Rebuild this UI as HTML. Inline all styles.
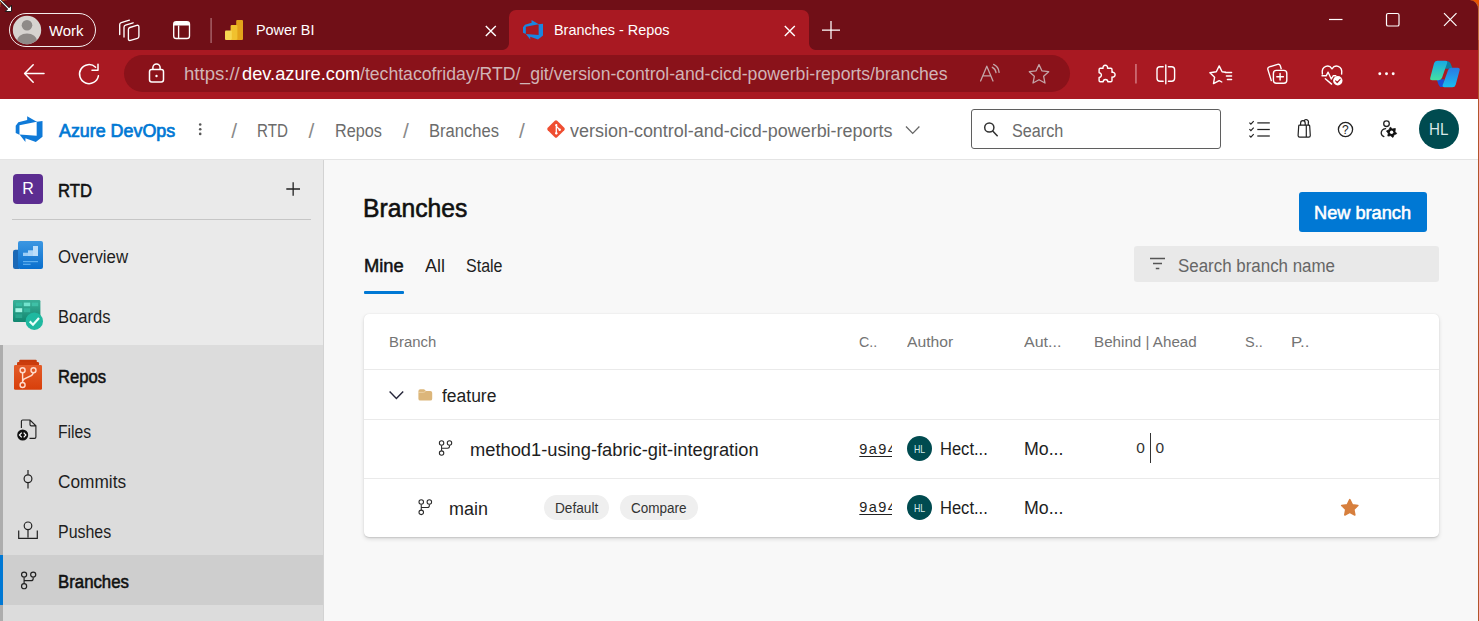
<!DOCTYPE html>
<html lang="en"><head><meta charset="utf-8"><title>Branches - Repos</title>
<style>
html,body{margin:0;padding:0;}
body{width:1479px;height:621px;overflow:hidden;position:relative;background:#f8f8f8;font-family:"Liberation Sans",sans-serif;}
body>span{display:block;}
.c9{position:absolute;overflow:hidden;white-space:pre;font-family:"Liberation Sans",sans-serif;}
</style></head>
<body>
<div style="position:absolute;left:1460px;top:0px;width:19px;height:20px;background:#e85400;"></div>
<div style="position:absolute;left:0px;top:0px;width:6px;height:6px;background:#c8531c;"></div>
<div style="position:absolute;left:0px;top:0px;width:1478px;height:50px;background:#700f17;border-right:1px solid #c2713d;border-top-right-radius:9px;border-top-left-radius:7px;"></div>
<div style="position:absolute;left:0px;top:50px;width:1479px;height:49px;background:#a91922;"></div>
<div style="position:absolute;left:509px;top:10px;width:300px;height:40px;background:#a91922;border-radius:7px 7px 0 0;"></div>
<div style="position:absolute;left:502px;top:43px;width:7px;height:7px;background:radial-gradient(circle at 0 0,#700f17 6.5px,#a91922 7.5px);"></div>
<div style="position:absolute;left:809px;top:43px;width:7px;height:7px;background:radial-gradient(circle at 100% 0,#700f17 6.5px,#a91922 7.5px);"></div>
<div style="position:absolute;left:9px;top:13px;width:84.8px;height:32px;border:1.5px solid rgba(255,255,255,.92);border-radius:18px;"></div>
<div style="position:absolute;left:124px;top:55px;width:946px;height:37px;background:#8a121a;border-radius:18.5px;"></div>
<div style="position:absolute;left:0px;top:99px;width:1478px;height:60px;background:#fff;"></div>
<div style="position:absolute;left:0px;top:159px;width:1478px;height:1px;background:#e4e4e4;"></div>
<div style="position:absolute;left:0px;top:160px;width:1478px;height:461px;background:#f8f8f8;"></div>
<div style="position:absolute;left:971px;top:109px;width:248px;height:38px;border:1px solid #5f5f5f;border-radius:3px;background:#fff;"></div>
<div style="position:absolute;left:1419px;top:109px;width:40px;height:40px;border-radius:50%;background:#004b50;"></div>
<div style="position:absolute;left:0px;top:160px;width:323px;height:461px;background:#eaeaea;"></div>
<div style="position:absolute;left:323px;top:160px;width:1px;height:461px;background:#d3d3d3;"></div>
<div style="position:absolute;left:12px;top:219px;width:299px;height:1px;background:#c6c6c6;"></div>
<div style="position:absolute;left:0px;top:345px;width:323px;height:276px;background:#dcdcdc;"></div>
<div style="position:absolute;left:0px;top:345px;width:3px;height:276px;background:#adadad;"></div>
<div style="position:absolute;left:0px;top:555px;width:323px;height:50px;background:#cecece;"></div>
<div style="position:absolute;left:0px;top:555px;width:3px;height:50px;background:#0078d4;"></div>
<div style="position:absolute;left:13px;top:174px;width:30px;height:30px;background:#5c2d91;border-radius:4px;"></div>
<div style="position:absolute;left:1299px;top:192px;width:128px;height:40px;background:#0078d4;border-radius:3px;"></div>
<div style="position:absolute;left:1134px;top:246px;width:304.5px;height:36px;background:#e9e9e9;border-radius:3px;"></div>
<div style="position:absolute;left:364px;top:291px;width:40px;height:3px;background:#0078d4;border-radius:1px;"></div>
<div style="position:absolute;left:364px;top:314px;width:1075px;height:223px;background:#fff;border-radius:5px;box-shadow:0 2px 4.5px rgba(0,0,0,.13),0 .4px 1.2px rgba(0,0,0,.11);"></div>
<div style="position:absolute;left:364px;top:369px;width:1075px;height:1px;background:#eaeaea;"></div>
<div style="position:absolute;left:364px;top:419px;width:1075px;height:1px;background:#eaeaea;"></div>
<div style="position:absolute;left:364px;top:478px;width:1075px;height:1px;background:#eaeaea;"></div>
<div style="position:absolute;left:544px;top:495px;width:65px;height:25px;background:#efefef;border-radius:12.5px;"></div>
<div style="position:absolute;left:620px;top:495px;width:78px;height:25px;background:#efefef;border-radius:12.5px;"></div>
<div style="position:absolute;left:907px;top:436.0px;width:25px;height:25px;border-radius:50%;background:#004b50;"></div>
<div style="position:absolute;left:907px;top:494.8px;width:25px;height:25px;border-radius:50%;background:#004b50;"></div>
<div style="position:absolute;left:1149.6px;top:433px;width:1.2000000000000455px;height:29.5px;background:#333;"></div>
<div style="position:absolute;left:1478px;top:40px;width:1px;height:581px;background:#b4552b;"></div>
<span style="position:absolute;left:49.00px;top:20.80px;font-size:15px;font-weight:400;color:#fff;line-height:20px;white-space:pre;transform-origin:0 50%;transform:scaleX(0.9936);">Work</span>
<span style="position:absolute;left:256.04px;top:19.60px;font-size:15px;font-weight:400;color:#fff;line-height:20px;white-space:pre;transform-origin:0 50%;transform:scaleX(0.9593);">Power BI</span>
<span style="position:absolute;left:554.04px;top:19.60px;font-size:15px;font-weight:400;color:#fff;line-height:20px;white-space:pre;transform-origin:0 50%;transform:scaleX(0.9615);">Branches - Repos</span>
<span style="position:absolute;left:184.44px;top:63.94px;font-size:17.5px;font-weight:400;color:#d1b4b6;line-height:20px;white-space:pre;transform-origin:0 50%;transform:scaleX(1.0607);">https://</span>
<span style="position:absolute;left:241.50px;top:63.94px;font-size:17.5px;font-weight:400;color:#ffffff;line-height:20px;white-space:pre;transform-origin:0 50%;transform:scaleX(1.0425);">dev.azure.com</span>
<span style="position:absolute;left:360.30px;top:63.94px;font-size:17.5px;font-weight:400;color:#d1b4b6;line-height:20px;white-space:pre;transform-origin:0 50%;transform:scaleX(1.0072);">/techtacofriday/RTD/_git/version-control-and-cicd-powerbi-reports/branches</span>
<span style="position:absolute;left:59.20px;top:120.54px;font-size:17.5px;font-weight:400;color:#0078d4;line-height:20px;white-space:pre;transform-origin:0 50%;transform:scaleX(1.0207);-webkit-text-stroke:0.70px #0078d4;">Azure DevOps</span>
<span style="position:absolute;left:231.20px;top:121.32px;font-size:21px;font-weight:400;color:#8a8a8a;line-height:20px;white-space:pre;transform-origin:0 50%;transform:scaleX(1.0000);">/</span>
<span style="position:absolute;left:257.16px;top:120.76px;font-size:18px;font-weight:400;color:#6b6b6b;line-height:20px;white-space:pre;transform-origin:0 50%;transform:scaleX(0.8411);">RTD</span>
<span style="position:absolute;left:308.50px;top:121.32px;font-size:21px;font-weight:400;color:#8a8a8a;line-height:20px;white-space:pre;transform-origin:0 50%;transform:scaleX(1.0000);">/</span>
<span style="position:absolute;left:335.10px;top:120.76px;font-size:18px;font-weight:400;color:#6b6b6b;line-height:20px;white-space:pre;transform-origin:0 50%;transform:scaleX(0.9014);">Repos</span>
<span style="position:absolute;left:403.00px;top:121.32px;font-size:21px;font-weight:400;color:#8a8a8a;line-height:20px;white-space:pre;transform-origin:0 50%;transform:scaleX(1.0000);">/</span>
<span style="position:absolute;left:429.08px;top:120.76px;font-size:18px;font-weight:400;color:#6b6b6b;line-height:20px;white-space:pre;transform-origin:0 50%;transform:scaleX(0.9195);">Branches</span>
<span style="position:absolute;left:519.00px;top:121.32px;font-size:21px;font-weight:400;color:#8a8a8a;line-height:20px;white-space:pre;transform-origin:0 50%;transform:scaleX(1.0000);">/</span>
<span style="position:absolute;left:569.50px;top:120.76px;font-size:18px;font-weight:400;color:#6b6b6b;line-height:20px;white-space:pre;transform-origin:0 50%;transform:scaleX(0.9981);">version-control-and-cicd-powerbi-reports</span>
<span style="position:absolute;left:1011.80px;top:120.76px;font-size:18px;font-weight:400;color:#6b6b6b;line-height:20px;white-space:pre;transform-origin:0 50%;transform:scaleX(0.8997);">Search</span>
<span style="position:absolute;left:1428.78px;top:119.48px;font-size:16.5px;font-weight:400;color:#d9e8e8;line-height:20px;white-space:pre;transform-origin:0 50%;transform:scaleX(0.9189);">HL</span>
<span style="position:absolute;left:22.25px;top:178.96px;font-size:16px;font-weight:400;color:#fff;line-height:20px;white-space:pre;transform-origin:0 50%;transform:scaleX(1.0000);">R</span>
<span style="position:absolute;left:58.07px;top:180.76px;font-size:18px;font-weight:400;color:#111;line-height:20px;white-space:pre;transform-origin:0 50%;transform:scaleX(0.9252);-webkit-text-stroke:0.55px #111;">RTD</span>
<span style="position:absolute;left:58.20px;top:246.96px;font-size:18px;font-weight:400;color:#1e1e1e;line-height:20px;white-space:pre;transform-origin:0 50%;transform:scaleX(0.9340);">Overview</span>
<span style="position:absolute;left:58.08px;top:306.56px;font-size:18px;font-weight:400;color:#1e1e1e;line-height:20px;white-space:pre;transform-origin:0 50%;transform:scaleX(0.9191);">Boards</span>
<span style="position:absolute;left:58.08px;top:366.76px;font-size:18px;font-weight:400;color:#111;line-height:20px;white-space:pre;transform-origin:0 50%;transform:scaleX(0.9210);-webkit-text-stroke:0.55px #111;">Repos</span>
<span style="position:absolute;left:58.13px;top:422.26px;font-size:18px;font-weight:400;color:#1e1e1e;line-height:20px;white-space:pre;transform-origin:0 50%;transform:scaleX(0.8729);">Files</span>
<span style="position:absolute;left:58.20px;top:472.06px;font-size:18px;font-weight:400;color:#1e1e1e;line-height:20px;white-space:pre;transform-origin:0 50%;transform:scaleX(0.9592);">Commits</span>
<span style="position:absolute;left:58.11px;top:522.26px;font-size:18px;font-weight:400;color:#1e1e1e;line-height:20px;white-space:pre;transform-origin:0 50%;transform:scaleX(0.8859);">Pushes</span>
<span style="position:absolute;left:58.07px;top:571.76px;font-size:18px;font-weight:400;color:#111;line-height:20px;white-space:pre;transform-origin:0 50%;transform:scaleX(0.9328);-webkit-text-stroke:0.55px #111;">Branches</span>
<span style="position:absolute;left:363.46px;top:198.16px;font-size:25.5px;font-weight:400;color:#111;line-height:20px;white-space:pre;transform-origin:0 50%;transform:scaleX(0.9678);-webkit-text-stroke:0.60px #111;">Branches</span>
<span style="position:absolute;left:364.28px;top:255.76px;font-size:18px;font-weight:400;color:#111;line-height:20px;white-space:pre;transform-origin:0 50%;transform:scaleX(1.0183);-webkit-text-stroke:0.50px #111;">Mine</span>
<span style="position:absolute;left:425.00px;top:255.76px;font-size:18px;font-weight:400;color:#1e1e1e;line-height:20px;white-space:pre;transform-origin:0 50%;transform:scaleX(0.9997);">All</span>
<span style="position:absolute;left:466.00px;top:255.76px;font-size:18px;font-weight:400;color:#1e1e1e;line-height:20px;white-space:pre;transform-origin:0 50%;transform:scaleX(0.8899);">Stale</span>
<span style="position:absolute;left:1313.99px;top:203.26px;font-size:18px;font-weight:400;color:#fff;line-height:20px;white-space:pre;transform-origin:0 50%;transform:scaleX(1.0102);-webkit-text-stroke:0.55px #fff;">New branch</span>
<span style="position:absolute;left:1178.00px;top:255.76px;font-size:18px;font-weight:400;color:#666;line-height:20px;white-space:pre;transform-origin:0 50%;transform:scaleX(0.9396);">Search branch name</span>
<span style="position:absolute;left:388.74px;top:331.63px;font-size:15.5px;font-weight:400;color:#747474;line-height:20px;white-space:pre;transform-origin:0 50%;transform:scaleX(0.9602);">Branch</span>
<span style="position:absolute;left:859.00px;top:331.63px;font-size:15.5px;font-weight:400;color:#747474;line-height:20px;white-space:pre;transform-origin:0 50%;transform:scaleX(0.9189);">C..</span>
<span style="position:absolute;left:907.00px;top:331.63px;font-size:15.5px;font-weight:400;color:#747474;line-height:20px;white-space:pre;transform-origin:0 50%;transform:scaleX(1.0109);">Author</span>
<span style="position:absolute;left:1024.00px;top:331.63px;font-size:15.5px;font-weight:400;color:#747474;line-height:20px;white-space:pre;transform-origin:0 50%;transform:scaleX(1.0322);">Aut...</span>
<span style="position:absolute;left:1094.02px;top:331.63px;font-size:15.5px;font-weight:400;color:#747474;line-height:20px;white-space:pre;transform-origin:0 50%;transform:scaleX(0.9798);">Behind | Ahead</span>
<span style="position:absolute;left:1244.50px;top:331.63px;font-size:15.5px;font-weight:400;color:#747474;line-height:20px;white-space:pre;transform-origin:0 50%;transform:scaleX(0.9351);">S..</span>
<span style="position:absolute;left:1290.91px;top:331.63px;font-size:15.5px;font-weight:400;color:#747474;line-height:20px;white-space:pre;transform-origin:0 50%;transform:scaleX(1.0924);">P..</span>
<span style="position:absolute;left:441.60px;top:385.66px;font-size:18px;font-weight:400;color:#1e1e1e;line-height:20px;white-space:pre;transform-origin:0 50%;transform:scaleX(0.9709);">feature</span>
<span style="position:absolute;left:469.78px;top:440.06px;font-size:18px;font-weight:400;color:#1e1e1e;line-height:20px;white-space:pre;transform-origin:0 50%;transform:scaleX(1.0155);">method1-using-fabric-git-integration</span>
<span style="position:absolute;left:449.40px;top:498.86px;font-size:18px;font-weight:400;color:#1e1e1e;line-height:20px;white-space:pre;transform-origin:0 50%;transform:scaleX(0.9972);">main</span>
<span style="position:absolute;left:555.12px;top:497.63px;font-size:15.5px;font-weight:400;color:#333;line-height:20px;white-space:pre;transform-origin:0 50%;transform:scaleX(0.8811);">Default</span>
<span style="position:absolute;left:631.00px;top:497.63px;font-size:15.5px;font-weight:400;color:#333;line-height:20px;white-space:pre;transform-origin:0 50%;transform:scaleX(0.8712);">Compare</span>
<span style="position:absolute;left:940.18px;top:439.36px;font-size:18px;font-weight:400;color:#1e1e1e;line-height:20px;white-space:pre;transform-origin:0 50%;transform:scaleX(0.9178);">Hect...</span>
<span style="position:absolute;left:940.18px;top:498.16px;font-size:18px;font-weight:400;color:#1e1e1e;line-height:20px;white-space:pre;transform-origin:0 50%;transform:scaleX(0.9178);">Hect...</span>
<span style="position:absolute;left:1024.01px;top:439.36px;font-size:18px;font-weight:400;color:#1e1e1e;line-height:20px;white-space:pre;transform-origin:0 50%;transform:scaleX(0.9867);">Mo...</span>
<span style="position:absolute;left:1024.01px;top:498.16px;font-size:18px;font-weight:400;color:#1e1e1e;line-height:20px;white-space:pre;transform-origin:0 50%;transform:scaleX(0.9867);">Mo...</span>
<span style="position:absolute;left:1136.25px;top:437.63px;font-size:15.5px;font-weight:400;color:#333;line-height:20px;white-space:pre;transform-origin:0 50%;transform:scaleX(1.0000);">0</span>
<span style="position:absolute;left:1155.50px;top:437.63px;font-size:15.5px;font-weight:400;color:#333;line-height:20px;white-space:pre;transform-origin:0 50%;transform:scaleX(1.0000);">0</span>
<span style="position:absolute;left:913.70px;top:438.76px;font-size:10.5px;font-weight:400;color:#d6ecec;line-height:20px;white-space:pre;transform-origin:0 50%;transform:scaleX(0.8319);">HL</span>
<span style="position:absolute;left:913.70px;top:497.56px;font-size:10.5px;font-weight:400;color:#d6ecec;line-height:20px;white-space:pre;transform-origin:0 50%;transform:scaleX(0.8319);">HL</span>
<span style="position:absolute;left:1342.10px;top:119.84px;font-size:12px;font-weight:400;color:#222;line-height:20px;white-space:pre;transform-origin:0 50%;transform:scaleX(1.0000);">?</span>
<div class="c9" style="left:859.3px;top:438.7px;width:32.7px;height:20px;font-size:14.5px;line-height:20px;letter-spacing:1.45px;color:#222;text-decoration:underline;text-underline-offset:1.5px;">9a94c</div><div class="c9" style="left:859.3px;top:497.4px;width:32.7px;height:20px;font-size:14.5px;line-height:20px;letter-spacing:1.45px;color:#222;text-decoration:underline;text-underline-offset:1.5px;">9a94c</div><svg width="1479" height="621" viewBox="0 0 1479 621" style="position:absolute;left:0;top:0;pointer-events:none;">
<g><path d="M0.5 0.5 L9 9" stroke="#111" stroke-width="2.600" stroke-linecap="square"/><path d="M11.500 5.200 V11.500 H5.200 Z" fill="#fff" stroke="#111" stroke-width=".900" stroke-linejoin="round"/><path d="M0 0 L9 9" stroke="#fff" stroke-width="1.100"/></g><clipPath id="cpAv"><circle cx="27" cy="30" r="14.2"/></clipPath><circle cx="27" cy="30" r="14.2" fill="#d6d3d0"/><g clip-path="url(#cpAv)"><circle cx="27" cy="25.3" r="5.3" fill="#8e8a88"/><ellipse cx="27" cy="41.5" rx="10.2" ry="8" fill="#8e8a88"/></g><g fill="none" stroke="#ffffff" stroke-width="1.35" stroke-linecap="round" stroke-linejoin="round"><path d="M128.4 29.6 q0-1.6 1.5-2.1 l6.9-2.1 q2.1-.6 2.1 1.5 v9.3 q0 1.6-1.5 2.1 l-6.9 2.1 q-2.1.6-2.1-1.5z"/><path d="M124 37 V27.2 q0-1.6 1.5-2.1 l7.6-2.3"/><path d="M119.7 34.6 V24.8 q0-1.6 1.5-2.1 l8.2-2.5"/></g><g fill="none" stroke="#ffffff" stroke-width="1.35"><rect x="173.7" y="21.7" width="15.8" height="16.8" rx="2.6"/><path d="M178.6 25.5 V38.5"/></g><path d="M174 25.6 V24 a2 2 0 0 1 2-2 h11.2 a2 2 0 0 1 2 2 V25.6z" fill="#ffffff"/><rect x="210.4" y="18" width="1.4" height="25" fill="#a8656b"/><rect x="236.2" y="20" width="6.8" height="20" rx="1" fill="#e3a21a"/><rect x="230.6" y="25" width="6.8" height="15" rx="1" fill="#f0c12e"/><rect x="225" y="30.6" width="6.8" height="9.4" rx="1" fill="#f6d751"/><path d="M485.8 26 L495.8 36 M495.8 26 L485.8 36" stroke="#ffffff" stroke-width="1.4"/><path d="M784.8 26 L794.8 36 M794.8 26 L784.8 36" stroke="#ffffff" stroke-width="1.4"/><path transform="translate(521.75,18.78) scale(1.25,1.22)" d="M17 4v9.74l-4 3.28-6.2-2.26V17l-3.51-4.59 10.23.8V4.44zm-3.41.49L7.85 1v2.29L2.58 4.84 1 6.87v4.61l2.26 1V6.57z" fill="#1a86e0"/><path d="M822 30 H840 M831 21 V39" stroke="#ffffff" stroke-width="1.25"/><path d="M1329 19.5 H1342.5" stroke="#ffffff" stroke-width="1.2"/><rect x="1386.5" y="13.5" width="12.5" height="12.5" rx="1.6" fill="none" stroke="#ffffff" stroke-width="1.2"/><path d="M1444 13.2 L1456.5 25.8 M1456.5 13.2 L1444 25.8" stroke="#ffffff" stroke-width="1.2"/><path d="M44 73.5 H25 M33.2 64.8 L24.6 73.5 L33.2 82.2" fill="none" stroke="#ffffff" stroke-width="1.5" stroke-linecap="round" stroke-linejoin="round"/><path d="M98.4 75.8 A9.5 9.5 0 1 1 95.6 67.2 M92 70.3 H98 V64.3" fill="none" stroke="#ffffff" stroke-width="1.5" stroke-linecap="round" stroke-linejoin="round"/><rect x="149.5" y="69.6" width="14" height="12.4" rx="2.2" fill="none" stroke="#ffffff" stroke-width="1.5"/><path d="M152.9 69.5 V67.6 a3.6 3.6 0 0 1 7.2 0 V69.5" fill="none" stroke="#ffffff" stroke-width="1.5"/><circle cx="156.5" cy="76" r="1.2" fill="#ffffff"/><g fill="none" stroke="#c4a5a8" stroke-width="1.3" stroke-linecap="round" stroke-linejoin="round"><path d="M980.6 81 L986.8 66.2 L993 81 M983 75.8 H990.6"/><path d="M992.3 67.3 q3.3 1.6 3.7 5.3 M993.6 64.4 q5 2.2 5.5 8"/></g><polygon points="1039.00,64.60 1041.88,70.84 1048.70,71.65 1043.66,76.31 1045.00,83.05 1039.00,79.70 1033.00,83.05 1034.34,76.31 1029.30,71.65 1036.12,70.84" fill="none" stroke="#c4a5a8" stroke-width="1.3" stroke-linejoin="round"/><path d="M1101.5 68.2 h1.6 a2.3 2.3 0 1 1 4.4 0 h3.3 q1.2 0 1.2 1.2 v3 a2.4 2.4 0 1 1 0 4.6 v3.6 q0 1.2-1.2 1.2 h-3 a2.3 2.3 0 1 0-4.6 0 h-2.9 q-1.2 0-1.2-1.2 v-3.2 a2.3 2.3 0 1 0 0-4.6 v-3.4 q0-1.2 1.2-1.2z" fill="none" stroke="#ffffff" stroke-width="1.4" stroke-linejoin="round"/><rect x="1135.3" y="64" width="1.3" height="19.5" fill="#d98990"/><g fill="none" stroke="#ffffff" stroke-width="1.4" stroke-linecap="round"><path d="M1163.2 66.8 H1160 a3 3 0 0 0-3 3 V78.3 a3 3 0 0 0 3 3 H1163.2"/><path d="M1168.4 66.8 H1171.6 a3 3 0 0 1 3 3 V78.3 a3 3 0 0 1-3 3 H1168.4"/><path d="M1165.8 65 V83.8"/></g><g fill="none" stroke="#ffffff" stroke-width="1.4" stroke-linecap="round" stroke-linejoin="round"><path d="M1225.5 72.3 l-3.4-.5 l-2.9-5.9 l-2.9 5.9 l-6.4.9 l4.7 4.5 l-1.1 6.4 l5.7-3 l2.6 1.4"/><path d="M1225.4 72.5 H1231.6 M1226.4 76 H1231.6 M1227.4 79.5 H1231.6"/></g><g fill="none" stroke="#ffffff" stroke-width="1.4" stroke-linecap="round" stroke-linejoin="round"><path d="M1271.3 80.6 L1267.9 69.6 q-.6-2 1.4-2.7 l8.3-2.5 q2-.6 2.7 1.4 l.9 2.9"/><rect x="1273.4" y="70.4" width="13.4" height="12.8" rx="3"/><path d="M1280.1 73.5 V80.1 M1276.8 76.8 H1283.4"/></g><g fill="none" stroke="#ffffff" stroke-width="1.4" stroke-linecap="round" stroke-linejoin="round"><path d="M1322.4 74 c-.6-3.2 .4-6.4 3.4-7.6 c2.4-.9 4.8 .2 6.2 2.4 c1.400-2.200 3.800-3.300 6.200-2.400 c3 1.200 4 4.400 3.400 7.600"/><path d="M1325.3 78.8 l6.3 5.300"/><path d="M1322 75.8 h4.200 l1.900-3.600 l3.200 6.800 l1.900-3.200 h2.600"/></g><circle cx="1337.8" cy="80.8" r="4.700" fill="#ffffff"/><path d="M1335.600 80.900 l1.600 1.600 l2.900-3.200" fill="none" stroke="#a91922" stroke-width="1.200" stroke-linecap="round" stroke-linejoin="round"/><circle cx="1379.8" cy="73.700" r="1.450" fill="#ffffff"/><circle cx="1386.5" cy="73.700" r="1.450" fill="#ffffff"/><circle cx="1393.2" cy="73.700" r="1.450" fill="#ffffff"/><defs><linearGradient id="cg1" x1="0" y1="0" x2="0" y2="1"><stop offset="0" stop-color="#18a9e6"/><stop offset="1" stop-color="#45e0a0"/></linearGradient><linearGradient id="cg2" x1="0" y1="0" x2="0" y2="1"><stop offset="0" stop-color="#2b78e2"/><stop offset="1" stop-color="#18bdf2"/></linearGradient></defs><path d="M1444.500 60.900 h1.800 q3.300 0 4.500 3.100 l1.800 4.800 h-8 z" fill="#0d7da3"/><path d="M1436.600 79.200 h7.500 l-.800 7.900 h-1.200 q-2.700 0-3.600-2.700z" fill="#1c50d8"/><path d="M1434.04 63.31 Q1434.70 60.80 1437.30 60.80 L1445.30 60.80 Q1447.90 60.80 1447.05 63.26 L1442.05 77.74 Q1441.20 80.20 1438.60 80.20 L1432.20 80.20 Q1429.60 80.20 1430.26 77.69 Z" fill="url(#cg1)"/><path d="M1448.02 70.25 Q1448.90 67.80 1451.50 67.80 L1457.70 67.80 Q1460.30 67.80 1459.62 70.31 L1455.68 84.79 Q1455.00 87.30 1452.40 87.30 L1444.50 87.30 Q1441.90 87.30 1442.78 84.85 Z" fill="url(#cg2)"/>
<path transform="translate(14.025,114.594) scale(1.675,1.606)" d="M17 4v9.74l-4 3.28-6.2-2.26V17l-3.51-4.59 10.23.8V4.44zm-3.41.49L7.85 1v2.29L2.58 4.84 1 6.87v4.61l2.26 1V6.57z" fill="#0f7ad8"/><circle cx="200.2" cy="124.5" r="1.3" fill="#575757"/><circle cx="200.2" cy="129.2" r="1.3" fill="#575757"/><circle cx="200.2" cy="133.9" r="1.3" fill="#575757"/><rect x="549.3" y="122.3" width="13.400" height="13.400" rx="1.700" transform="rotate(45 556 129)" fill="#ef4e31"/><g stroke="#fff" stroke-width="1.300" fill="none" stroke-linecap="round"><path d="M556.300 125 V133.500 M556.300 126.300 L559.600 129.600"/></g><circle cx="556.300" cy="133.300" r="1.200" fill="#fff"/><circle cx="559.700" cy="129.700" r="1.200" fill="#fff"/><circle cx="556.300" cy="125.200" r="1.100" fill="#fff"/><path d="M906 126.500 L912.700 133.400 L919.400 126.500" fill="none" stroke="#666" stroke-width="1.300"/><circle cx="989.300" cy="127.500" r="4.600" fill="none" stroke="#333" stroke-width="1.500"/><path d="M992.700 131 L997.200 135.700" stroke="#333" stroke-width="1.600" stroke-linecap="round"/><path d="M1249.400 122.60000000000001 l1.500 1.500 l2.800-3" fill="none" stroke="#222222" stroke-width="1.150"/><path d="M1257.300 122.9 H1269.800" stroke="#222222" stroke-width="1.250"/><path d="M1249.400 129.2 l1.500 1.500 l2.800-3" fill="none" stroke="#222222" stroke-width="1.150"/><path d="M1257.300 129.5 H1269.800" stroke="#222222" stroke-width="1.250"/><path d="M1249.400 135.7 l1.500 1.500 l2.800-3" fill="none" stroke="#222222" stroke-width="1.150"/><path d="M1257.300 136 H1269.800" stroke="#222222" stroke-width="1.250"/><g fill="none" stroke="#222222" stroke-width="1.200"><path d="M1298.700 126 q0-.800 .800-.800 h9.400 q.800 0 .800 .800 l.600 9.500 q0 1.600-1.600 1.600 h-9 q-1.600 0-1.600-1.600z"/><path d="M1300.600 125.200 V123.300 a2.300 2.700 0 0 1 4.600 0 V125.200 M1303.900 121.300 a2.300 2.700 0 0 1 4.400 2 V125.200 M1306.300 125.200 V137"/></g><circle cx="1345.500" cy="129.500" r="7.100" fill="none" stroke="#222222" stroke-width="1.300"/><g fill="none" stroke="#222222" stroke-width="1.300" stroke-linecap="round"><circle cx="1386.500" cy="123.700" r="2.800"/><path d="M1385.600 128.600 q-4.400 .700-4.400 4.500 q0 2.500 2.700 3.500"/></g><polygon points="1396.72,133.67 1394.07,134.77 1392.97,137.42 1390.69,135.68 1387.85,136.05 1388.22,133.21 1386.48,130.93 1389.13,129.83 1390.23,127.18 1392.51,128.92 1395.35,128.55 1394.98,131.39" fill="#111" stroke="#111" stroke-width=".800" stroke-linejoin="round"/><circle cx="1391.600" cy="132.300" r="1.700" fill="#fff"/><path d="M286.300 189 H300 M293.150 182.200 V195.800" stroke="#222222" stroke-width="1.300"/><defs><linearGradient id="ovg" x1="0" y1="0" x2="0" y2="1"><stop offset="0" stop-color="#3c97e2"/><stop offset="1" stop-color="#0a6fcd"/></linearGradient></defs><path d="M13 252 q0-2.200 2.200-2.200 H19 V269 H15.200 q-2.200 0-2.200-2.200z" fill="#1b69b6"/><rect x="18" y="241" width="25" height="28" rx="2" fill="url(#ovg)"/><rect x="23" y="252.700" width="5" height="3.300" fill="#9ccdf6"/><rect x="28" y="250.300" width="5" height="5.700" fill="#a9d4f8"/><rect x="33" y="246" width="5" height="10" fill="#bcdefa"/><rect x="23" y="261" width="15" height="1.200" fill="#5fb0f0"/><rect x="23" y="263.700" width="7.600" height="1.200" fill="#5fb0f0"/><defs><linearGradient id="bdg" x1="0" y1="0" x2="0" y2="1"><stop offset="0" stop-color="#3bb098"/><stop offset="1" stop-color="#128770"/></linearGradient></defs><rect x="13" y="300" width="27.400" height="22" rx="1.200" fill="url(#bdg)"/><rect x="15.800" y="302.600" width="6.400" height="3.600" fill="#37baa1"/><rect x="23.800" y="302.600" width="6.400" height="3.600" fill="#72e3cd"/><rect x="31.800" y="302.600" width="6.400" height="3.600" fill="#3fc0a7"/><rect x="15.400" y="308.200" width="6.800" height="4" fill="#a6f5e4"/><rect x="23.800" y="308.200" width="6.400" height="4" fill="#33b49b"/><rect x="15.400" y="314.200" width="6.800" height="3.800" fill="#2aa58d"/><circle cx="34.300" cy="321.200" r="8.700" fill="#1fb9a0"/><path d="M29.700 321.400 l3.300 3.300 l6-6.600" fill="none" stroke="#e9fffa" stroke-width="2.200"/><defs><linearGradient id="rpg" x1="0" y1="0" x2="0" y2="1"><stop offset="0" stop-color="#e35c29"/><stop offset="1" stop-color="#d83f0a"/></linearGradient></defs><path d="M19.200 362 v-1.200 q0-1.100 1.100-1.100 h15.400 q1.100 0 1.100 1.100 V362z" fill="#c63a0b"/><path d="M17 365 v-1.800 q0-1.200 1.200-1.200 h19.600 q1.200 0 1.200 1.200 V365z" fill="#cb3c0c"/><rect x="14" y="365" width="28" height="24.800" rx="1.300" fill="url(#rpg)"/><g fill="none" stroke="#ffdccd" stroke-width="1.400"><circle cx="22.600" cy="370.200" r="2.500"/><circle cx="33.500" cy="370.200" r="2.500"/><circle cx="22.600" cy="385" r="2.500"/><path d="M22.600 373 V382.200 M33.400 373 L31.700 375.500 L24 379 L22.700 381"/></g><path d="M21.400 428 V421.300 q0-1.300 1.300-1.300 H30 L35.900 425.800 V437 q0 1.300-1.300 1.300 H29.500 M30 420 V424.500 q0 1.300 1.300 1.300 H35.900" fill="none" stroke="#222222" stroke-width="1.150"/><circle cx="22.700" cy="435" r="5.500" fill="#111"/><path d="M21.700 432.700 L19.500 435 L21.700 437.300 M23.700 432.700 L25.900 435 L23.700 437.300" fill="none" stroke="#fff" stroke-width="1.200"/><circle cx="28" cy="478.700" r="3.900" fill="none" stroke="#222222" stroke-width="1.200"/><path d="M28 470 V474.800 M28 482.600 V488.500" stroke="#222222" stroke-width="1.200"/><circle cx="28" cy="525.800" r="3.800" fill="none" stroke="#222222" stroke-width="1.200"/><path d="M28 529.600 V537.600 M18.700 530.500 V538.300 H37.300 V530.500" fill="none" stroke="#222222" stroke-width="1.200"/><g fill="none" stroke="#222222" stroke-width="1.2"><circle cx="24.10" cy="574.60" r="2.55"/><circle cx="33.20" cy="574.60" r="2.55"/><circle cx="24.10" cy="586.20" r="2.55"/><path d="M24.10 577.40 V583.40 M33.20 577.40 V578.40 Q33.20 580.70 30.90 580.70 H24.10"/></g><g fill="none" stroke="#2a2a2a" stroke-width="1.05"><circle cx="441.58" cy="442.98" r="2.22"/><circle cx="449.50" cy="442.98" r="2.22"/><circle cx="441.58" cy="453.08" r="2.22"/><path d="M441.58 445.42 V450.64 M449.50 445.42 V446.29 Q449.50 448.29 447.50 448.29 H441.58"/></g><g fill="none" stroke="#2a2a2a" stroke-width="1.05"><circle cx="421.25" cy="502.05" r="2.27"/><circle cx="429.35" cy="502.05" r="2.27"/><circle cx="421.25" cy="512.37" r="2.27"/><path d="M421.25 504.54 V509.88 M429.35 504.54 V505.43 Q429.35 507.48 427.30 507.48 H421.25"/></g><path d="M1150 258.500 H1165 M1153 263.500 H1162 M1155.800 268.500 H1159.300" stroke="#555" stroke-width="1.300"/><path d="M389.600 391.400 L396.400 398.600 L403.200 391.400" fill="none" stroke="#26263a" stroke-width="1.400"/><path d="M418.400 391.200 q0-1.900 1.900-1.900 h3.400 q.800 0 1.300.600 l.900 1 h4.400 q1.900 0 1.900 1.900 v5.900 q0 1.900-1.900 1.900 h-10 q-1.900 0-1.900-1.900z" fill="#dcb67a"/><path d="M418.400 392.300 h5.200 q.700 0 1.200-.500 l.900-.900" fill="none" stroke="#f3dfbd" stroke-width=".700"/><polygon points="1349.80,499.60 1352.27,504.70 1357.88,505.47 1353.79,509.40 1354.80,514.98 1349.80,512.30 1344.80,514.98 1345.81,509.40 1341.72,505.47 1347.33,504.70" fill="#d77f3d" stroke="#d77f3d" stroke-width="1.600" stroke-linejoin="round"/>
</svg>
</body></html>
